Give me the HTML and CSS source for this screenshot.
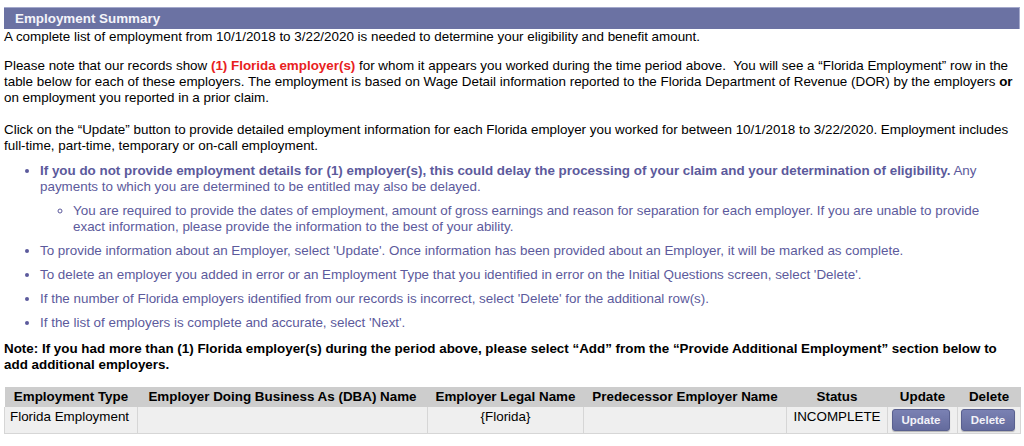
FILE: index.html
```html
<!DOCTYPE html>
<html lang="en">
<head>
    <meta charset="UTF-8">
    <meta name="viewport" content="width=device-width, initial-scale=1.0">
    <title>Employment Summary</title>
    <link rel="stylesheet" href="styles.css">
</head>
<body>
    <div class="page">
        <div class="section-title">Employment Summary</div>
        <p class="intro">A complete list of employment from 10/1/2018 to 3/22/2020 is needed to determine your eligibility and benefit amount.</p>
        <p class="para">Please note that our records show <span class="alert">(1) Florida employer(s)</span> for whom it appears you worked during the time period above.&nbsp; You will see a &ldquo;Florida Employment&rdquo; row in the table below for each of these employers. The employment is based on Wage Detail information reported to the Florida Department of Revenue (DOR) by the employers <b>or</b> on employment you reported in a prior claim.</p>
        <p class="para para-gap">Click on the &ldquo;Update&rdquo; button to provide detailed employment information for each Florida employer you worked for between 10/1/2018 to 3/22/2020. Employment includes full-time, part-time, temporary or on-call employment.</p>

        <ul class="notes">
            <li><b>If you do not provide employment details for (1) employer(s), this could delay the processing of your claim and your determination of eligibility.</b> Any payments to which you are determined to be entitled may also be delayed.
                <ul class="sub-notes">
                    <li>You are required to provide the dates of employment, amount of gross earnings and reason for separation for each employer. If you are unable to provide exact information, please provide the information to the best of your ability.</li>
                </ul>
            </li>
            <li>To provide information about an Employer, select 'Update'. Once information has been provided about an Employer, it will be marked as complete.</li>
            <li>To delete an employer you added in error or an Employment Type that you identified in error on the Initial Questions screen, select 'Delete'.</li>
            <li>If the number of Florida employers identified from our records is incorrect, select 'Delete' for the additional row(s).</li>
            <li>If the list of employers is complete and accurate, select 'Next'.</li>
        </ul>

        <p class="note">Note: If you had more than (1) Florida employer(s) during the period above, please select &ldquo;Add&rdquo; from the &ldquo;Provide Additional Employment&rdquo; section below to add additional employers.</p>

        <table class="emp-table">
            <colgroup>
                <col class="col-type">
                <col class="col-dba">
                <col class="col-legal">
                <col class="col-pred">
                <col class="col-status">
                <col class="col-update">
                <col class="col-delete">
            </colgroup>
            <thead>
                <tr>
                    <th>Employment Type</th>
                    <th>Employer Doing Business As (DBA) Name</th>
                    <th>Employer Legal Name</th>
                    <th>Predecessor Employer Name</th>
                    <th>Status</th>
                    <th>Update</th>
                    <th>Delete</th>
                </tr>
            </thead>
            <tbody>
                <tr>
                    <td>Florida Employment</td>
                    <td></td>
                    <td class="center">{Florida}</td>
                    <td></td>
                    <td class="center">INCOMPLETE</td>
                    <td class="btn-cell"><button class="button btn-update">Update</button></td>
                    <td class="btn-cell"><button class="button btn-delete">Delete</button></td>
                </tr>
            </tbody>
        </table>
    </div>
</body>
</html>
```

FILE: styles.css
```css
body { margin: 0; font-family: "Liberation Sans", Arial, sans-serif; font-size: 13.4px; line-height: 16px; color: #000; background-color: #fff; }
.page { padding: 6px 4px 0 4px; }
.section-title { height: 22px; line-height: 22px; padding-left: 11px; background-color: #6b72a3; border: 1px solid #a4a9cb; border-width: 1px 1px 0 0; color: #f4f4fa; font-weight: bold; font-size: 13.4px; box-sizing: border-box; margin-top: 1px; }
.intro { margin: 0; }
.para { margin: 13px 0 0 0; }
.para-gap { margin-top: 16px; }
.alert { color: #e8211d; font-weight: bold; }
.notes { margin: 9px 0 0 0; padding: 0 30px 0 36px; color: #5c5a9c; list-style: disc; }
.notes li { margin-bottom: 8px; }
.sub-notes { margin: 8px 0 0 0; padding-left: 33px; list-style: circle; }
.note { margin: 10px 0 0 0; font-weight: bold; }
.emp-table { width: 1016px; margin-top: 14px; border-collapse: collapse; table-layout: fixed; }
.col-type { width: 133px; }
.col-dba { width: 290px; }
.col-legal { width: 156px; }
.col-pred { width: 203px; }
.col-status { width: 101px; }
.col-update { width: 70px; }
.col-delete { width: 63px; }
.emp-table th { height: 20px; padding: 0 2px; background-color: #cdcdcd; font-weight: bold; text-align: center; white-space: nowrap; line-height: 16px; }
.emp-table td { height: 26px; padding: 2px 4px 0 5px; background-color: #efefef; border: 1px solid #d6d6d6; border-top: none; vertical-align: top; box-sizing: border-box; }
.emp-table td.center { text-align: center; padding-left: 2px; padding-right: 2px; }
.emp-table td.btn-cell { padding: 2px 0 0 3px; }
.button { height: 22px; padding: 0; border: 1px solid #59608f; border-radius: 3px; background: linear-gradient(#7a81b3, #646b9d); color: #f2f2f8; font-family: "Liberation Sans", Arial, sans-serif; font-size: 11.5px; font-weight: bold; cursor: pointer; box-shadow: 0 1px 1px rgba(0, 0, 0, 0.25); }
.btn-update { width: 58px; margin-left: 1px; }
.btn-delete { width: 54px; }
```
